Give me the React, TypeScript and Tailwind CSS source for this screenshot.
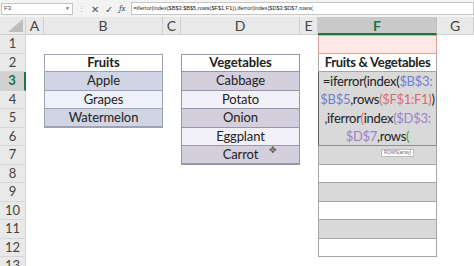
import React from "react";

const rows = [
  { n: 1, cls: "row-start-2" },
  { n: 2, cls: "row-start-3" },
  { n: 3, cls: "row-start-4" },
  { n: 4, cls: "row-start-5" },
  { n: 5, cls: "row-start-6" },
  { n: 6, cls: "row-start-7" },
  { n: 7, cls: "row-start-8" },
  { n: 8, cls: "row-start-9" },
  { n: 9, cls: "row-start-10" },
  { n: 10, cls: "row-start-11" },
  { n: 11, cls: "row-start-12" },
  { n: 12, cls: "row-start-13" },
  { n: 13, cls: "row-start-14" },
];

function FormulaBar() {
  return (
    <div className="flex h-[17px] items-center bg-[#f3f3f3] text-[#444]">
      <div className="ml-[1px] flex h-[12px] w-[72px] items-center justify-between border border-[#c6c6c6] bg-white px-[2px] font-['Liberation_Sans',sans-serif] text-[6px]">
        <span>F3</span>
        <span className="text-[5px] text-[#666]">▼</span>
      </div>
      <span className="ml-[5px] text-[7px] text-[#aaa]">⋮</span>
      <div className="ml-[6px] flex items-center gap-[6px]">
        <span className="text-[10px] leading-none text-[#555]">✕</span>
        <span className="text-[10px] leading-none text-[#555]">✓</span>
        <span className="font-serif text-[9px] italic leading-none text-[#555]">fx</span>
      </div>
      <div className="ml-[5px] flex h-[13px] flex-1 items-center border border-[#c6c6c6] bg-white pl-[2px] font-['Liberation_Sans',sans-serif] text-[5.6px] text-[#222]">
        =iferror(index($B$3:$B$5,rows($F$1:F1)),iferror(index($D$3:$D$7,rows(
      </div>
    </div>
  );
}

function Head({ label, sel }: { label: string; sel?: boolean }) {
  return (
    <div
      className={
        sel
          ? "flex items-center justify-center border-r border-b-2 border-r-[#c0c0c0] border-b-[#217346] bg-[#c9c9c9] text-[14px] font-bold text-[#217346]"
          : "flex items-center justify-center border-r border-b border-[#cfcfcf] bg-[#e9e9e9] text-[14px] text-[#444]"
      }
    >
      {label}
    </div>
  );
}

export default function App() {
  const cell = "flex items-center justify-center text-[13px] tracking-[-0.1px] text-[#222]";
  const fCell = "col-start-7 border-x border-b border-[#a6a6a6]";
  return (
    <div className="h-[266px] w-[474px] overflow-hidden bg-white font-['Lato','Open_Sans',sans-serif]">
      <FormulaBar />
      <div className="grid grid-cols-[26px_18px_119px_18px_119px_18px_119px_1fr] grid-rows-[18px_repeat(13,18.5px)]">
        {/* header row */}
        <div className="relative border-r border-b border-[#cfcfcf] bg-[#e9e9e9]">
          <div className="absolute bottom-[2px] right-[2px] h-0 w-0 border-b-[13px] border-l-[15px] border-b-[#bdbdbd] border-l-transparent" />
        </div>
        <Head label="A" />
        <Head label="B" />
        <Head label="C" />
        <Head label="D" />
        <Head label="E" />
        <Head label="F" sel />
        <Head label="G" />

        {/* row headers */}
        {rows.map((r) => (
          <div
            key={r.n}
            className={
              r.n === 3
                ? `col-start-1 ${r.cls} flex items-center justify-center border-r-2 border-b border-r-[#217346] border-b-[#cfcfcf] bg-[#d2d2d2] text-[13px] font-bold text-[#217346]`
                : `col-start-1 ${r.cls} flex items-center justify-center border-r border-b border-[#d6d6d6] bg-[#e9e9e9] text-[13px] text-[#444]`
            }
          >
            {r.n}
          </div>
        ))}

        {/* Fruits table */}
        <div className={`col-start-3 row-start-3 ${cell} border border-[#9ea3b3] bg-white font-bold`}>Fruits</div>
        <div className={`col-start-3 row-start-4 ${cell} border-x border-b border-[#9ea3b3] bg-[#cfd5e3]`}>Apple</div>
        <div className={`col-start-3 row-start-5 ${cell} border-x border-b border-[#9ea3b3] bg-[#eef1fb]`}>Grapes</div>
        <div className={`col-start-3 row-start-6 ${cell} border-x border-b-2 border-[#9ea3b3] bg-[#cfd5e3]`}>Watermelon</div>

        {/* Vegetables table */}
        <div className={`col-start-5 row-start-3 ${cell} border border-[#9a96a6] bg-white font-bold`}>Vegetables</div>
        <div className={`col-start-5 row-start-4 ${cell} border-x border-b border-[#9a96a6] bg-[#d3cfdc]`}>Cabbage</div>
        <div className={`col-start-5 row-start-5 ${cell} border-x border-b border-[#9a96a6] bg-[#f2f0f9]`}>Potato</div>
        <div className={`col-start-5 row-start-6 ${cell} border-x border-b border-[#9a96a6] bg-[#d3cfdc]`}>Onion</div>
        <div className={`col-start-5 row-start-7 ${cell} border-x border-b border-[#9a96a6] bg-[#f2f0f9]`}>Eggplant</div>
        <div className={`col-start-5 row-start-8 ${cell} relative border-x border-b-2 border-[#9a96a6] bg-[#d3cfdc]`}>
          Carrot
          <span className="absolute right-[22px] top-[-3px] text-[9px] text-[#555]">✥</span>
        </div>

        {/* F column */}
        <div className="col-start-7 row-start-2 border border-[#e3a19b] bg-[#fce9e6]" />
        <div className={`row-start-3 ${fCell} ${cell} bg-white font-bold tracking-[-0.3px]`}>Fruits &amp; Vegetables</div>
        <div className="col-start-7 row-span-4 row-start-4 flex flex-col items-center justify-center border-x border-b border-[#8f8f8f] border-l-[#5f5f5f] bg-[#d9d9d9] text-[13px] leading-[18.5px] tracking-[-0.3px] text-[#222]">
          <div>
            =iferror(index(<span className="text-[#6f7fd0]">$B$3:</span>
          </div>
          <div>
            <span className="text-[#6f7fd0]">$B$5</span>,rows<span className="text-[#e06a6a]">($F$1:F1)</span>)
          </div>
          <div>
            ,iferror<span className="text-[#e06a6a]">(</span>index<span className="text-[#9b82c8]">($D$3:</span>
          </div>
          <div>
            <span className="text-[#9b82c8]">$D$7</span>,rows<span className="text-[#2f9e5f]">(</span>
          </div>
        </div>
        <div className={`row-start-8 ${fCell} relative bg-[#d9d9d9]`}>
          <div className="absolute left-[62px] top-[3px] border border-[#bbb] bg-white px-[2px] font-['Liberation_Sans',sans-serif] text-[4.5px] leading-[6px] text-[#666]">
            ROWS(array)
          </div>
        </div>
        <div className={`row-start-9 ${fCell} bg-white`} />
        <div className={`row-start-10 ${fCell} bg-[#d9d9d9]`} />
        <div className={`row-start-11 ${fCell} bg-white`} />
        <div className={`row-start-12 ${fCell} bg-[#d9d9d9]`} />
        <div className={`row-start-13 ${fCell} bg-white`} />
      </div>
    </div>
  );
}
